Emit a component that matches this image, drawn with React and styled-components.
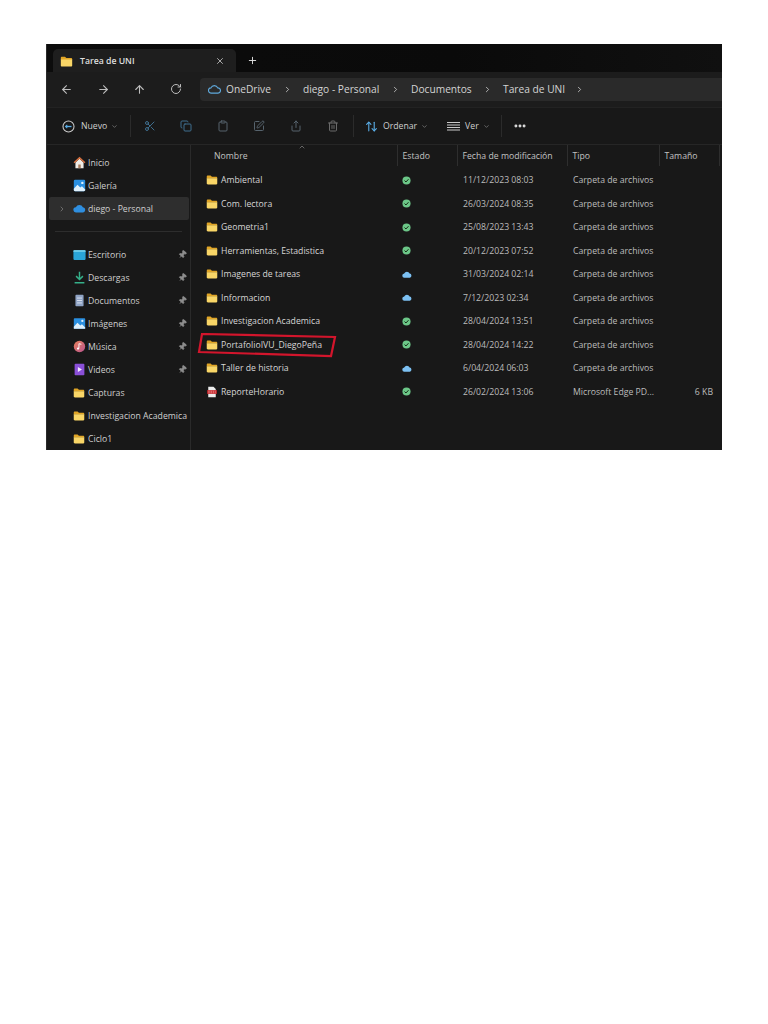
import React from 'react';
import styled, { createGlobalStyle } from 'styled-components';
import { ArrowLeft, ArrowRight, ArrowUp, RotateCw, ChevronRight, ChevronDown, ChevronUp, X, Plus, Scissors, Copy, Clipboard, SquarePen, Share, Trash2, MoreHorizontal, ArrowUpDown, Pin } from 'lucide-react';

const Global = createGlobalStyle`
  html, body { margin: 0; padding: 0; background: #fff; }
  body { font-family: "Open Sans", "Noto Sans", sans-serif; }
`;

const Page = styled.div`
  padding: 44px 0 0 46px;
  min-height: 980px;
  box-sizing: border-box;
`;
const Win = styled.div`
  position: relative;
  width: 676px;
  height: 406px;
  background: #181818;
  color: #cfcfcf;
  overflow: hidden;
  display: flex;
  flex-direction: column;
  font-size: 8.7px;
  box-sizing: border-box;
  border-left: 1px solid #2a2a2a;
`;
const TabBar = styled.div`
  height: 28px;
  flex: none;
  background: linear-gradient(90deg, #0c0c0c, #0a0a0a 60%, #101010);
  display: flex;
  align-items: flex-end;
  padding-left: 6px;
`;
const Tab = styled.div`
  width: 183px;
  height: 23px;
  background: #1e1e1e;
  border-radius: 5px 5px 0 0;
  display: flex;
  align-items: center;
  padding: 1px 11px 0 7px;
  box-sizing: border-box;
  gap: 7px;
`;
const TabTitle = styled.span`
  flex: 1;
  font-weight: 600;
  color: #dedede;
`;
const NewTab = styled.span`
  display: flex;
  align-items: center;
  height: 23px;
  margin-left: 11px;
  color: #e6e6e6;
`;
const NavBar = styled.div`
  height: 35px;
  flex: none;
  background: #1c1c1c;
  display: flex;
  align-items: center;
  padding: 0 0 1px 13px;
  box-sizing: border-box;
`;
const NavBtn = styled.span`
  width: ${p => p.$w || 36.7}px;
  flex: none;
  display: flex;
  justify-content: flex-start;
  color: #bdbdbd;
`;
const Address = styled.div`
  flex: 1;
  height: 23px;
  background: #2a2a2a;
  border-radius: 4px 0 0 4px;
  display: flex;
  align-items: center;
  padding-left: 8px;
  font-size: 10.2px;
  color: #d4d4d4;
`;
const Crumb = styled.span`
  width: ${p => p.$w}px;
  flex: none;
  white-space: nowrap;
  margin-left: ${p => p.$ml || 0}px;
`;
const CrumbSep = styled.span`
  width: ${p => p.$w || 24}px;
  flex: none;
  display: flex;
  justify-content: center;
  color: #d8d8d8;
`;
const Toolbar = styled.div`
  height: 38px;
  flex: none;
  background: #181818;
  border-top: 1px solid #222;
  border-bottom: 1px solid #262626;
  box-sizing: border-box;
  display: flex;
  align-items: center;
  padding-left: 15px;
`;
const ToolText = styled.span`
  margin-left: ${p => p.$ml || 6}px;
  color: #cfcfcf;
  white-space: nowrap;
`;
const Chevron = styled.span`
  display: flex;
  margin: 0 ${p => p.$mr || 0}px 0 4px;
  color: #9a9a9a;
`;
const ToolSep = styled.span`
  width: 1px;
  height: 22px;
  background: #2b2b2b;
  flex: none;
  margin: ${p => p.$m || '0'};
`;
const ToolIcon = styled.span`
  width: 36.6px;
  flex: none;
  display: flex;
  justify-content: center;
  color: ${p => p.$c || '#5a5a5a'};
`;
const Body = styled.div`
  flex: 1;
  display: flex;
  min-height: 0;
`;
const Side = styled.div`
  width: 144px;
  flex: none;
  border-right: 1px solid #2a2a2a;
  padding: 6px 0 0 2px;
  box-sizing: border-box;
  overflow: hidden;
`;
const SideRow = styled.div`
  height: 23px;
  display: flex;
  align-items: center;
  padding-left: 24px;
  margin-right: 1px;
  position: relative;
  border-radius: 2px;
  background: ${p => (p.$active ? '#2e2e2e' : 'transparent')};
  gap: 1px;
  white-space: nowrap;
`;
const SideIcon = styled.span`
  width: 14px;
  flex: none;
  display: flex;
  align-items: center;
`;
const SideLabel = styled.span`
  flex: 1;
`;
const PinBox = styled.span`
  display: flex;
  margin-right: 2px;
  color: #8e8e8e;
  transform: rotate(40deg);
`;
const SideChevron = styled.span`
  position: absolute;
  left: 9px;
  top: 8px;
  display: flex;
  color: #8a8a8a;
`;
const SideDivider = styled.div`
  height: 1px;
  background: #2d2d2d;
  margin: 11px 8px 11px 6px;
`;
const Main = styled.div`
  flex: 1;
  min-width: 0;
`;
const Head = styled.div`
  height: 21px;
  display: grid;
  grid-template-columns: 207px 60px 110px 92px 60px;
  position: relative;
`;
const HeadCell = styled.div`
  display: flex;
  align-items: center;
  padding-left: ${p => p.$pl || 4.500}px;
  border-right: 1px solid #2e2e2e;
  color: #c2c2c2;
  height: 21px;
  white-space: nowrap;
`;
const SortCaret = styled.span`
  position: absolute;
  left: 107px;
  top: -2px;
  display: flex;
  color: #8b8b8b;
`;
const Rows = styled.div`
  padding-top: 2.5px;
`;
const Row = styled.div`
  height: 23.5px;
  display: grid;
  grid-template-columns: 207px 60px 110px 92px 53px;
  align-items: center;
  white-space: nowrap;
`;
const NameCell = styled.div`
  display: flex;
  align-items: center;
  padding-left: 15px;
  gap: 3px;
  color: #d6d6d6;
`;
const StatusCell = styled.div`
  display: flex;
  padding-left: 4px;
`;
const TextCell = styled.div`
  padding-left: 5px;
  color: ${p => p.$c || '#bcbcbc'};
`;
const SizeCell = styled.div`
  text-align: right;
  color: #bcbcbc;
`;
const Mark = styled.svg`
  position: absolute;
  left: 150px;
  top: 289px;
  width: 142px;
  height: 26px;
  pointer-events: none;
`;
const FolderSvg = styled.svg`
  flex: none;
  display: block;
`;

const Folder = ({ s = 12 }) => (
  <FolderSvg width={s} height={s} viewBox="0 0 16 16">
    <path d="M1 3.500C1 2.700 1.600 2 2.400 2h3.700l1.800 1.800h5.700c.8 0 1.400.6 1.400 1.400V6H1z" fill="#e0a526" />
    <path d="M1 5.600h14v7.200c0 .7-.6 1.200-1.200 1.200H2.200C1.600 14 1 13.500 1 12.800z" fill="#f9d667" />
  </FolderSvg>
);
const Home = () => (
  <svg width="13" height="13" viewBox="0 0 16 16">
    <path d="M3 8v7h10V8L8 3.500z" fill="#f0ece6" />
    <path d="M6.500 15v-4.500h3V15z" fill="#a87a5a" />
    <path d="M8 1L.7 7.700l1.200 1.300L8 3.500l6.100 5.500 1.200-1.300z" fill="#d9703e" />
  </svg>
);
const Gallery = () => (
  <svg width="13" height="13" viewBox="0 0 16 16">
    <rect x="1" y="1" width="14" height="14" rx="1.500" fill="#2a8fe0" />
    <path d="M1 12l4.500-5 3.500 3.500 2-1.500 4 4v.5c0 .8-.7 1.500-1.500 1.500h-11C1.700 15 1 14.300 1 13.500z" fill="#dff0fb" />
    <circle cx="11.500" cy="4.800" r="1.500" fill="#dff0fb" />
  </svg>
);
const CloudFill = ({ c = '#2f8fe0', w = 13, h = 9 }) => (
  <svg width={w} height={h} viewBox="0 0 16 11">
    <path d="M4 10.500a3.300 3.300 0 0 1-.5-6.600A4.800 4.800 0 0 1 12.200 4a3.300 3.300 0 0 1 .3 6.500z" fill={c} />
  </svg>
);
const CloudLine = () => (
  <svg width="13" height="10" viewBox="0 0 16 12" fill="none" stroke="#5fa9dc" strokeWidth="1.400">
    <path d="M4 11a3.200 3.200 0 0 1-.4-6.400A4.600 4.600 0 0 1 12 4.600 3.200 3.200 0 0 1 12.300 11z" />
  </svg>
);
const Desktop = () => (
  <svg width="13" height="12" viewBox="0 0 16 14">
    <rect x="0.500" y="1" width="15" height="12" rx="1" fill="#2aa5d8" />
    <path d="M.5 2c0-.6.4-1 1-1h13c.6 0 1 .4 1 1v1H.5z" fill="#7fd7ef" />
  </svg>
);
const Download = () => (
  <svg width="13" height="13" viewBox="0 0 16 16" fill="none" stroke="#35b08a" strokeWidth="1.800">
    <path d="M8 1v9M3.800 6.300L8 10.500l4.200-4.200M2 14.500h12" />
  </svg>
);
const Doc = () => (
  <svg width="13" height="13" viewBox="0 0 16 16">
    <rect x="3" y="1" width="10" height="14" rx="1" fill="#8fa3c4" />
    <path d="M5 5h6M5 8h6M5 11h6" stroke="#e7edf6" strokeWidth="1" />
  </svg>
);
const Images = () => (
  <svg width="13" height="13" viewBox="0 0 16 16">
    <rect x="1" y="1.500" width="14" height="13" rx="1" fill="#2a8fe0" />
    <path d="M1 12l4.500-5 3.500 3.500 2-1.500 4 4v1.500H1z" fill="#dff0fb" />
    <circle cx="11.500" cy="4.800" r="1.400" fill="#dff0fb" />
  </svg>
);
const Music = () => (
  <svg width="13" height="13" viewBox="0 0 16 16">
    <defs>
      <linearGradient id="mg" x1="0" y1="0" x2="1" y2="1">
        <stop offset="0" stopColor="#e8805a" />
        <stop offset="1" stopColor="#b9548f" />
      </linearGradient>
    </defs>
    <circle cx="8" cy="8" r="7" fill="url(#mg)" />
    <path d="M7.300 10.300V4.500l3 .8" stroke="#fff" strokeWidth="1.100" fill="none" />
    <circle cx="6.200" cy="10.500" r="1.400" fill="#fff" />
  </svg>
);
const Video = () => (
  <svg width="13" height="13" viewBox="0 0 16 16">
    <rect x="2" y="1" width="12" height="14" rx="1" fill="#8a4fd8" />
    <path d="M6 5l5 3-5 3z" fill="#f3e8ff" />
  </svg>
);
const Ok = () => (
  <svg width="9" height="9" viewBox="0 0 10 10">
    <circle cx="5" cy="5" r="4.500" fill="#6cc788" />
    <path d="M2.800 5.100l1.600 1.500 2.800-3" stroke="#10240f" strokeWidth="1.100" fill="none" />
  </svg>
);
const Pdf = () => (
  <svg width="12" height="12" viewBox="0 0 16 16">
    <path d="M3 1h7l3 3v11H3z" fill="#ececec" />
    <rect x="1.500" y="5.500" width="13" height="5" fill="#c8282d" />
    <path d="M3 7h10M3 9h10" stroke="#f3b6b6" strokeWidth="0.800" strokeDasharray="2 1" />
  </svg>
);
const NewIcon = () => (
  <svg width="13" height="13" viewBox="0 0 16 16" fill="none">
    <circle cx="8" cy="8" r="6.800" stroke="#c9c9c9" strokeWidth="1.300" />
    <path d="M4.300 8h7.400" stroke="#5aaee8" strokeWidth="1.600" />
    <path d="M6.500 6l-2 2 2 2" stroke="#5aaee8" strokeWidth="1.300" />
  </svg>
);
const ViewLines = () => (
  <svg width="13" height="10" viewBox="0 0 13 10" stroke="#c9c9c9" strokeWidth="1">
    <path d="M0 1.500h13M0 4h13M0 6.500h13M0 9h13" />
  </svg>
);

const pins = { size: 9, strokeWidth: 2, fill: 'currentColor' };

const sideItems = [
  { label: 'Escritorio', icon: <Desktop />, pin: true },
  { label: 'Descargas', icon: <Download />, pin: true },
  { label: 'Documentos', icon: <Doc />, pin: true },
  { label: 'Imágenes', icon: <Images />, pin: true },
  { label: 'Música', icon: <Music />, pin: true },
  { label: 'Videos', icon: <Video />, pin: true },
  { label: 'Capturas', icon: <Folder /> },
  { label: 'Investigacion Academica', icon: <Folder /> },
  { label: 'Ciclo1', icon: <Folder /> },
];

const files = [
  ['Ambiental', 'ok', '11/12/2023 08:03'],
  ['Com. lectora', 'ok', '26/03/2024 08:35'],
  ['Geometria1', 'ok', '25/08/2023 13:43'],
  ['Herramientas, Estadistica', 'ok', '20/12/2023 07:52'],
  ['Imagenes de tareas', 'cloud', '31/03/2024 02:14'],
  ['Informacion', 'cloud', '7/12/2023 02:34'],
  ['Investigacion Academica', 'ok', '28/04/2024 13:51'],
  ['PortafolioIVU_DiegoPeña', 'ok', '28/04/2024 14:22'],
  ['Taller de historia', 'cloud', '6/04/2024 06:03'],
  ['ReporteHorario', 'ok', '26/02/2024 13:06', 'Microsoft Edge PD...', '6 KB', true],
];

export default function App() {
  return (
    <Page>
      <Global />
      <Win>
        <TabBar>
          <Tab>
            <Folder s={13} />
            <TabTitle>Tarea de UNI</TabTitle>
            <X size={10} color="#c4c4c4" />
          </Tab>
          <NewTab><Plus size={11} /></NewTab>
        </TabBar>
        <NavBar>
          <NavBtn><ArrowLeft size={13} /></NavBtn>
          <NavBtn><ArrowRight size={13} /></NavBtn>
          <NavBtn><ArrowUp size={13} /></NavBtn>
          <NavBtn $w={30}><RotateCw size={12} /></NavBtn>
          <Address>
            <CloudLine />
            <Crumb $w={45} $ml={5}>OneDrive</Crumb>
            <CrumbSep $w={32}><ChevronRight size={9} /></CrumbSep>
            <Crumb $w={77}>diego - Personal</Crumb>
            <CrumbSep $w={31}><ChevronRight size={9} /></CrumbSep>
            <Crumb $w={60}>Documentos</Crumb>
            <CrumbSep $w={32}><ChevronRight size={9} /></CrumbSep>
            <Crumb $w={60}>Tarea de UNI</Crumb>
            <CrumbSep $w={32}><ChevronRight size={9} /></CrumbSep>
          </Address>
        </NavBar>
        <Toolbar>
          <NewIcon />
          <ToolText>Nuevo</ToolText>
          <Chevron $mr={12}><ChevronDown size={7} /></Chevron>
          <ToolSep />
          <ToolIcon $c="#3f6f8f"><Scissors size={12} /></ToolIcon>
          <ToolIcon $c="#3f6f8f"><Copy size={12} /></ToolIcon>
          <ToolIcon $c="#56636d"><Clipboard size={12} /></ToolIcon>
          <ToolIcon $c="#56636d"><SquarePen size={12} /></ToolIcon>
          <ToolIcon $c="#56636d"><Share size={12} /></ToolIcon>
          <ToolIcon $c="#6a6a6a"><Trash2 size={12} /></ToolIcon>
          <ToolSep $m="0 11px 0 2px" />
          <ArrowUpDown size={13} color="#5aaee8" />
          <ToolText $ml={5}>Ordenar</ToolText>
          <Chevron $mr={19}><ChevronDown size={7} /></Chevron>
          <ViewLines />
          <ToolText $ml={5}>Ver</ToolText>
          <Chevron $mr={11}><ChevronDown size={7} /></Chevron>
          <ToolSep $m="0 11px 0 0" />
          <MoreHorizontal size={14} color="#e2e2e2" strokeWidth={3} />
        </Toolbar>
        <Body>
          <Side>
            <SideRow><SideIcon><Home /></SideIcon><SideLabel>Inicio</SideLabel></SideRow>
            <SideRow><SideIcon><Gallery /></SideIcon><SideLabel>Galería</SideLabel></SideRow>
            <SideRow $active>
              <SideChevron><ChevronRight size={8} /></SideChevron>
              <SideIcon><CloudFill /></SideIcon>
              <SideLabel>diego - Personal</SideLabel>
            </SideRow>
            <SideDivider />
            {sideItems.map(item => (
              <SideRow key={item.label}>
                <SideIcon>{item.icon}</SideIcon>
                <SideLabel>{item.label}</SideLabel>
                {item.pin && <PinBox><Pin {...pins} /></PinBox>}
              </SideRow>
            ))}
          </Side>
          <Main>
            <Head>
              <SortCaret><ChevronUp size={8} /></SortCaret>
              <HeadCell $pl={23}>Nombre</HeadCell>
              <HeadCell>Estado</HeadCell>
              <HeadCell>Fecha de modificación</HeadCell>
              <HeadCell>Tipo</HeadCell>
              <HeadCell>Tamaño</HeadCell>
            </Head>
            <Rows>
              {files.map(([name, status, date, type, size, pdf]) => (
                <Row key={name}>
                  <NameCell>{pdf ? <Pdf /> : <Folder />}{name}</NameCell>
                  <StatusCell>
                    {status === 'ok' ? <Ok /> : <CloudFill c="#7cc0f2" w={10} h={7} />}
                  </StatusCell>
                  <TextCell>{date}</TextCell>
                  <TextCell>{type || 'Carpeta de archivos'}</TextCell>
                  <SizeCell>{size || ''}</SizeCell>
                </Row>
              ))}
            </Rows>
          </Main>
        </Body>
        <Mark viewBox="0 0 142 26" fill="none">
          <path d="M5 1L138 4 134 23 2 19z" stroke="#d3152c" strokeWidth="2.200" />
        </Mark>
      </Win>
    </Page>
  );
}
